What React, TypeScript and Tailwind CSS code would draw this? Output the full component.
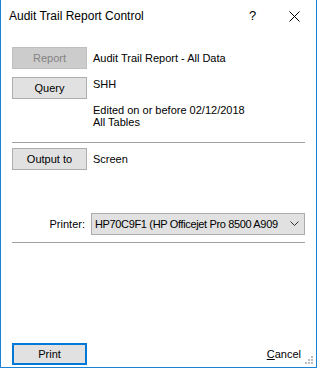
import React from "react";

const font = { fontFamily: '"Liberation Sans", Arial, sans-serif' };

function Btn({
  children,
  disabled,
  primary,
}: {
  children: React.ReactNode;
  disabled?: boolean;
  primary?: boolean;
}) {
  if (disabled) {
    return (
      <div className="w-[75px] h-[22px] shrink-0 flex items-center justify-center border border-[#bfbfbf] bg-[#cccccc] text-[#838383]">
        {children}
      </div>
    );
  }
  if (primary) {
    return (
      <div className="w-[75px] h-[22px] shrink-0 flex items-center justify-center border-2 border-[#0078d7] bg-[#e1e1e1] text-black">
        {children}
      </div>
    );
  }
  return (
    <div className="w-[75px] h-[22px] shrink-0 flex items-center justify-center border border-[#adadad] bg-[#e1e1e1] text-black">
      {children}
    </div>
  );
}

export default function App() {
  return (
    <div
      className="relative w-[317px] h-[368px] bg-white border-x border-b border-[#1883d7] flex flex-col text-[11px] text-black"
      style={font}
    >
      {/* Title bar */}
      <div className="h-[32px] flex items-center pl-[8px] text-[12px]">
        <span className="flex-1">Audit Trail Report Control</span>
        <span className="w-[10px] mr-[30px] text-[13px]">?</span>
        <svg width="11" height="11" viewBox="0 0 11 11" className="mr-[16px]">
          <path d="M0.5 0.5 L10.5 10.5 M10.5 0.5 L0.5 10.5" stroke="#000" strokeWidth="1" />
        </svg>
      </div>

      <div className="flex-1 flex flex-col px-[11px] pt-[15px]">
        {/* Report */}
        <div className="flex items-center gap-[6px]">
          <Btn disabled>Report</Btn>
          <span>Audit Trail Report - All Data</span>
        </div>

        {/* Query */}
        <div className="flex gap-[6px] mt-[8px]">
          <Btn>Query</Btn>
          <div className="flex flex-col pt-[1px] leading-[12px]">
            <span>SHH</span>
            <span className="mt-[14px]">Edited on or before 02/12/2018</span>
            <span>All Tables</span>
          </div>
        </div>

        <div className="h-px bg-[#a0a0a0] mt-[14px]" />

        {/* Output */}
        <div className="flex items-center gap-[6px] mt-[5px]">
          <Btn>Output to</Btn>
          <span>Screen</span>
        </div>

        {/* Printer */}
        <div className="flex items-center mt-[43px]">
          <span className="w-[73px] text-right">Printer:</span>
          <div className="ml-[6px] w-[214px] h-[22px] border border-[#acacac] bg-[#e1e1e1] flex items-center pl-[3px] pr-[5px]">
            <span className="flex-1 whitespace-nowrap tracking-[-0.35px]">
              HP70C9F1 (HP Officejet Pro 8500 A909
            </span>
            <svg width="9" height="6" viewBox="0 0 9 6" className="ml-[2px]">
              <path d="M0.5 0.5 L4.5 4.5 L8.5 0.5" stroke="#333" fill="none" strokeWidth="1" />
            </svg>
          </div>
        </div>

        <div className="h-px bg-[#a0a0a0] mt-[7px]" />

        {/* Bottom buttons */}
        <div className="mt-auto mb-[2px] flex items-center justify-between pr-[4px]">
          <Btn primary>Print</Btn>
          <span>
            <span className="underline">C</span>ancel
          </span>
        </div>
      </div>

      {/* size grip */}
      <svg width="9" height="9" viewBox="0 0 9 9" className="absolute right-[2px] bottom-[2px]">
        <rect x="6" y="0" width="2" height="2" fill="#bdbdbd" />
        <rect x="3" y="3" width="2" height="2" fill="#bdbdbd" />
        <rect x="6" y="3" width="2" height="2" fill="#bdbdbd" />
        <rect x="0" y="6" width="2" height="2" fill="#bdbdbd" />
        <rect x="3" y="6" width="2" height="2" fill="#bdbdbd" />
        <rect x="6" y="6" width="2" height="2" fill="#bdbdbd" />
      </svg>
    </div>
  );
}
